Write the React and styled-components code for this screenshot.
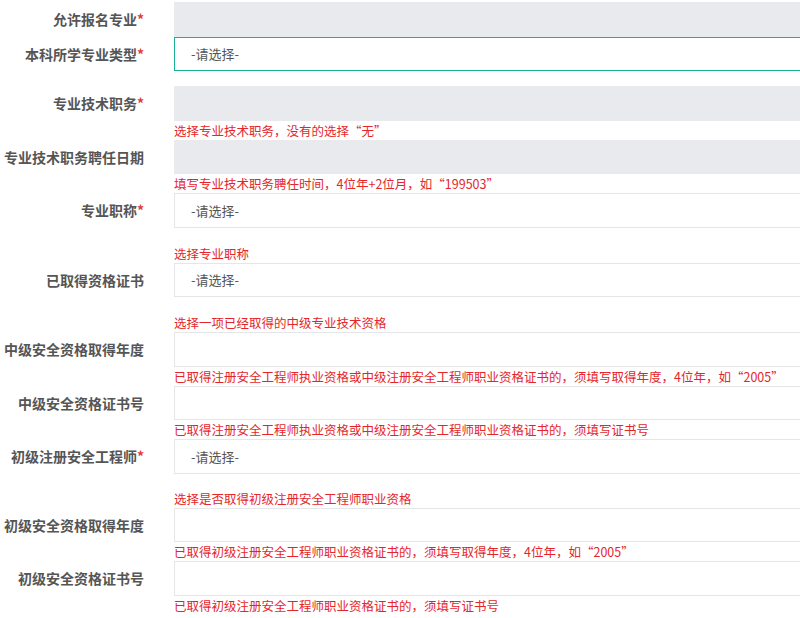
import React from 'react';
import styled, {createGlobalStyle} from 'styled-components';

const Global = createGlobalStyle`
  body {
    margin: 0;
    background: #fff;
    overflow: hidden;
    font-family: "Microsoft YaHei", "Noto Sans CJK SC", "Liberation Sans", sans-serif;
  }
`;

const rows = [
  {label: '允许报名专业', req: true, kind: 'disabled'},
  {label: '本科所学专业类型', req: true, kind: 'select', focus: true, after: 15},
  {label: '专业技术职务', req: true, kind: 'disabled', help: '选择专业技术职务，没有的选择“无”'},
  {label: '专业技术职务聘任日期', kind: 'disabled', help: '填写专业技术职务聘任时间，4位年+2位月，如“199503”'},
  {label: '专业职称', req: true, kind: 'select', after: 16, help: '选择专业职称'},
  {label: '已取得资格证书', kind: 'select', after: 16, help: '选择一项已经取得的中级专业技术资格'},
  {label: '中级安全资格取得年度', kind: 'text', help: '已取得注册安全工程师执业资格或中级注册安全工程师职业资格证书的，须填写取得年度，4位年，如“2005”'},
  {label: '中级安全资格证书号', kind: 'text', help: '已取得注册安全工程师执业资格或中级注册安全工程师职业资格证书的，须填写证书号'},
  {label: '初级注册安全工程师', req: true, kind: 'select', after: 15, help: '选择是否取得初级注册安全工程师职业资格'},
  {label: '初级安全资格取得年度', kind: 'text', help: '已取得初级注册安全工程师职业资格证书的，须填写取得年度，4位年，如“2005”'},
  {label: '初级安全资格证书号', kind: 'text', help: '已取得初级注册安全工程师职业资格证书的，须填写证书号'},
];

const App = () => (
  <Form>
    <Global />
    {rows.map((r, i) => (
      <Row key={i}>
        <Label>{r.label}{r.req && <Star>*</Star>}</Label>
        <Field>
          <Input kind={r.kind} focus={r.focus}>
            {r.kind === 'select' ? '-请选择-' : ''}
          </Input>
          {r.after && <Spacer h={r.after} />}
          {r.help && <Help>{r.help}</Help>}
        </Field>
      </Row>
    ))}
  </Form>
);

const Form = styled.div`
  padding-top: 2px;
  width: 820px;
`;

const Row = styled.div`
  display: grid;
  grid-template-columns: 174px 1fr;
  align-items: start;
`;

const Label = styled.div`
  height: 34px;
  display: flex;
  align-items: center;
  justify-content: flex-end;
  padding-right: 30px;
  font-size: 14px;
  font-weight: bold;
  color: #555;
  white-space: nowrap;
`;

const Star = styled.span`
  color: #e4393c;
`;

const Field = styled.div`
  display: flex;
  flex-direction: column;
`;

const Input = styled.div`
  box-sizing: border-box;
  height: 34.5px;
  display: flex;
  align-items: center;
  padding-left: 16px;
  font-size: 13px;
  color: #555;
  background: ${p => (p.kind === 'disabled' ? '#e9eaed' : '#fff')};
  border: 1px solid ${p => (p.focus ? '#1ab394' : p.kind === 'disabled' ? '#e9eaed' : '#e5e6e7')};
`;

const Spacer = styled.div`
  height: ${p => p.h}px;
`;

const Help = styled.div`
  height: 19px;
  line-height: 19px;
  font-size: 12.5px;
  color: #e4262b;
  white-space: nowrap;
`;

export default App;
